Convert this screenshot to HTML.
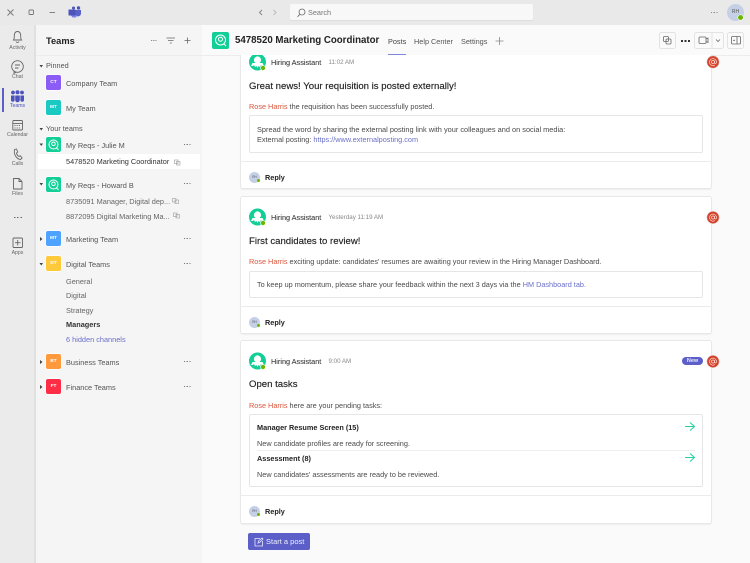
<!DOCTYPE html>
<html><head><meta charset="utf-8">
<style>
html,body{margin:0;padding:0;width:750px;height:563px;overflow:hidden;background:#fafafa;font-family:"Liberation Sans",sans-serif;}
#r{position:relative;width:750px;height:563px;overflow:hidden;filter:blur(.3px);background:#fafafa;}
.a{position:absolute;}
.t{position:absolute;white-space:nowrap;line-height:12px;font-size:7.3px;color:#4a4a4a;}
.s{position:absolute;white-space:nowrap;line-height:12px;font-size:7.35px;color:#555;left:66px;}
.rl{position:absolute;width:35px;text-align:center;left:0;font-size:5.2px;line-height:7px;color:#666;white-space:nowrap;}
.card{position:absolute;left:240px;width:472px;background:#fff;border:1px solid #e8e8e8;border-radius:3px;box-sizing:border-box;box-shadow:0 1px 1px #eee;}
.box{position:absolute;left:249px;width:454px;background:#fff;border:1px solid #e6e6e6;border-radius:2px;box-sizing:border-box;}
.hr{position:absolute;left:240px;width:472px;height:1px;background:#ececec;}
.tile{position:absolute;left:46px;width:15px;height:15px;border-radius:2px;color:#fff;font-size:4.8px;font-weight:bold;line-height:15px;text-align:center;box-shadow:0 0 0 .7px #fff;}
.dots{position:absolute;left:184px;width:7px;height:1.2px;background:repeating-linear-gradient(90deg,#777 0 1.2px,transparent 1.2px 2.7px);}
.rn{color:#d8553c;}
.lk{color:#6a70c8;}
.b{color:#222;}
.h{font-size:9.6px;-webkit-text-stroke:.15px #222;}
.n{-webkit-text-stroke:.1px #444;color:#3c3c3c;}
.rh{position:absolute;left:249px;width:11px;height:11px;border-radius:50%;background:#c5d0e6;color:#556;font-size:3.2px;line-height:11px;text-align:center;}
.st{position:absolute;left:256.500px;width:3.500px;height:3.500px;border-radius:50%;background:#6bb700;}
svg{position:absolute;overflow:visible;}
</style></head><body><div id="r">
<div class="a" style="left:0;top:0;width:750px;height:25px;background:#e9e9e9"></div>
<div class="a" style="left:0;top:25px;width:36px;height:538px;background:#ebebeb"></div>
<div class="a" style="left:34px;top:25px;width:2px;height:538px;background:#e0e0e0"></div>
<div class="a" style="left:36px;top:25px;width:166px;height:538px;background:#f5f5f5"></div>
<div class="a" style="left:36px;top:55px;width:166px;height:1px;background:#ececec"></div>
<div class="a" style="left:202px;top:25px;width:548px;height:31px;background:#fafafa;border-bottom:1px solid #ececec;box-sizing:border-box"></div>

<!-- window controls -->
<svg style="left:0;top:0" width="90" height="25" fill="none" stroke="#777" stroke-width=".9">
<path d="M7.500 9.500l6 6M13.500 9.500l-6 6"/><rect x="29" y="10" width="4.500" height="4.500" rx="1"/><path d="M49.500 12.500h5.500"/>
<circle cx="78.500" cy="8" r="1.700" fill="#4b53bc" stroke="none"/><circle cx="73.500" cy="8" r="1.500" fill="#4b53bc" stroke="none"/>
<path d="M68.500 9.500h7v6h-7z" fill="#4b53bc" stroke="none"/><path d="M75.500 10h5.500v3.500a3 3 0 0 1-5.500 1.500z" fill="#5a62c8" stroke="none"/><path d="M71 15.500h6l-1 2h-3.500z" fill="#7b83eb" stroke="none"/>
</svg>
<svg style="left:255px;top:0" width="30" height="25" fill="none" stroke-width="1"><path d="M7 10l-2.500 2.500L7 15" stroke="#888"/><path d="M18.500 10l2.500 2.500-2.500 2.500" stroke="#bbb"/></svg>
<div class="a" style="left:290px;top:4px;width:243px;height:16px;background:#f8f8f8;border-radius:2px;box-shadow:0 1px 1px #ddd"></div>
<svg style="left:297px;top:8px" width="10" height="10" fill="none" stroke="#666" stroke-width=".8"><circle cx="5" cy="4" r="3"/><path d="M3 6.200L.5 8.800"/></svg>
<div class="t" style="left:308px;top:7px;color:#777">Search</div>
<div class="dots" style="left:711px;top:12px;background:repeating-linear-gradient(90deg,#888 0 1.200px,transparent 1.200px 2.700px)"></div>
<div class="a" style="left:727px;top:4px;width:17px;height:17px;border-radius:50%;background:#c5d0e6;color:#555;font-size:5px;line-height:17px;text-align:center">RH</div>
<div class="a" style="left:738px;top:15px;width:5px;height:5px;border-radius:50%;background:#6bb700;box-shadow:0 0 0 .5px #fff"></div>

<!-- rail -->
<svg style="left:0;top:0" width="36" height="260" fill="none" stroke="#666" stroke-width=".9">
<path d="M13.500 40c.8-1 .8-2 .8-4 0-3 1-4.500 3.200-4.500s3.200 1.500 3.200 4.500c0 2 0 3 .8 4zM16 41.500a1.600 1.600 0 0 0 3 0"/>
<circle cx="17.500" cy="66.500" r="5.800"/><path d="M14 71v2.500l2.500-1.500M15 65h5M15 68h3.500"/>
<rect x="12.800" y="120.500" width="9.700" height="9.500" rx="1"/><path d="M12.800 123.500h9.700"/><path d="M14.500 125.500h6M14.500 128h6" stroke-dasharray="1 1.200"/>
<path d="M14.500 149.500l2-.5 1.200 3-1.200 1c.3 1.500 1.200 2.800 2.500 3.500l1.300-.8 1.800 2.300-1.500 1.500c-4.500-.5-7-5.500-6.100-10z"/>
<path d="M13.500 178.500h5.500l3 3v7.500h-8.500zM19 178.500v3h3"/>
<rect x="13" y="238" width="9.500" height="9.500" rx="1"/><path d="M17.700 240v5.500M15 242.700h5.500"/>
</svg>
<div class="rl" style="top:45px">Activity</div>
<div class="rl" style="top:74px">Chat</div>
<div class="a" style="left:2px;top:88px;width:1.500px;height:24px;background:#5b5fc7"></div>
<svg style="left:10px;top:90px" width="16" height="13" fill="#4b53bc"><circle cx="3" cy="2.500" r="1.900"/><circle cx="7.500" cy="2.200" r="2"/><circle cx="12" cy="2.500" r="1.900"/><path d="M1 5.500h3.600v4.500a1.800 1.800 0 0 1-3.600 0zM10.400 5.500H14v4.500a1.800 1.800 0 0 1-3.600 0zM5.200 5.500h4.600v4.500a2.300 2.300 0 0 1-4.600 0z"/></svg>
<div class="rl" style="top:103px;color:#4b53bc">Teams</div>
<div class="rl" style="top:132px">Calendar</div>
<div class="rl" style="top:161px">Calls</div>
<div class="rl" style="top:191px">Files</div>
<div class="dots" style="left:13.500px;top:216.500px;width:8px;height:1.500px;background:repeating-linear-gradient(90deg,#666 0 1.500px,transparent 1.500px 3.200px)"></div>
<div class="rl" style="top:250px">Apps</div>

<!-- sidebar -->
<div class="t" style="left:46px;top:35px;font-size:9.300px;font-weight:bold;color:#222">Teams</div>
<svg style="left:150px;top:36px" width="44" height="10" fill="none" stroke="#666" stroke-width=".8"><path d="M1 4.500h5.500" stroke-dasharray="1.200 1"/><path d="M16.500 2h8.500M18 4.500h5.500M19.800 7h2"/><path d="M34.500 4.500h6M37.500 1.500v6"/></svg>
<div class="t" style="left:46px;top:60px;color:#555">Pinned</div>
<div class="t" style="left:46px;top:123px;color:#555">Your teams</div>
<svg style="left:38px;top:60px" width="8" height="340" fill="#444">
<path d="M1.500 5h3.500L3.250 7.500zM1.500 68h3.500L3.250 70.500zM1.500 83.500h3.500L3.250 86zM1.500 123h3.500L3.250 125.500zM1.500 203h3.500L3.250 205.500z"/>
<path d="M2 177l2.500 2-2.500 2zM2 300l2.500 2-2.500 2zM2 325l2.500 2-2.500 2z"/></svg>
<div class="tile" style="top:75px;background:#8b5cf6">CT</div><div class="s" style="top:77.500px">Company Team</div>
<div class="tile" style="top:100px;background:#1bc9c3">MT</div><div class="s" style="top:102.500px">My Team</div>
<div class="tile" style="top:137px;background:#12cf97"></div><div class="s" style="top:139.500px">My Reqs - Julie M</div>
<div class="a" style="left:38px;top:154px;width:162px;height:15px;background:#fff"></div>
<div class="s" style="top:156px;color:#333">5478520 Marketing Coordinator</div>
<div class="tile" style="top:177px;background:#12cf97"></div><div class="s" style="top:179.500px">My Reqs - Howard B</div>
<div class="s" style="top:196px;color:#666">8735091 Manager, Digital dep...</div>
<div class="s" style="top:210.500px;color:#666">8872095 Digital Marketing Ma...</div>
<div class="tile" style="top:231px;background:#4da3ff">MT</div><div class="s" style="top:233.500px">Marketing Team</div>
<div class="tile" style="top:256px;background:#ffc93c">DT</div><div class="s" style="top:258.500px">Digital Teams</div>
<div class="s" style="top:275.500px;color:#666">General</div>
<div class="s" style="top:290px;color:#666">Digital</div>
<div class="s" style="top:304.500px;color:#666">Strategy</div>
<div class="s" style="top:319px;color:#333;font-weight:bold">Managers</div>
<div class="s lk" style="top:334px">6 hidden channels</div>
<div class="tile" style="top:354px;background:#ff9a3c">BT</div><div class="s" style="top:356.500px">Business Teams</div>
<div class="tile" style="top:379px;background:#ff2d46">FT</div><div class="s" style="top:381.500px">Finance Teams</div>
<div class="dots" style="top:143.500px"></div>
<div class="dots" style="top:183px"></div>
<div class="dots" style="top:237.500px"></div>
<div class="dots" style="top:262.500px"></div>
<div class="dots" style="top:360.500px"></div>
<div class="dots" style="top:385.500px"></div>
<svg style="left:46px;top:137px" width="16" height="56" fill="none" stroke="#fff" stroke-width="1"><circle cx="7.500" cy="7.500" r="4.500"/><circle cx="7.500" cy="6.800" r="1.800"/><path d="M10.500 11l2 2"/><circle cx="7.500" cy="47.500" r="4.500"/><circle cx="7.500" cy="46.800" r="1.800"/><path d="M10.500 51l2 2"/></svg>
<svg style="left:173px;top:159px" width="10" height="62" fill="none" stroke="#999" stroke-width=".6"><rect x="1.500" y="1" width="3.500" height="3.500"/><rect x="3.500" y="2.500" width="3.500" height="3.500"/><rect x="-.5" y="39.500" width="3.500" height="3.500"/><rect x="2" y="41" width="3.500" height="3.500"/><rect x=".5" y="54" width="3.500" height="3.500"/><rect x="3" y="55.500" width="3.500" height="3.500"/></svg>

<!-- header -->
<div class="a" style="left:212px;top:32px;width:17px;height:17px;background:#12cf97;border-radius:2px"></div>
<svg style="left:212px;top:32px" width="17" height="17" fill="none" stroke="#fff" stroke-width="1"><circle cx="8.500" cy="8" r="5"/><circle cx="8.500" cy="7.200" r="2"/><path d="M12 12l2 2"/></svg>
<div class="t" style="left:235px;top:35px;font-size:9.700px;font-weight:bold;color:#222">5478520 Marketing Coordinator</div>
<div class="t" style="left:388px;top:35.500px;color:#444">Posts</div>
<div class="a" style="left:388px;top:54px;width:18px;height:1.500px;background:#7f85d8"></div>
<div class="t" style="left:414px;top:35.500px;color:#555">Help Center</div>
<div class="t" style="left:461px;top:35.500px;color:#555">Settings</div>
<svg style="left:495px;top:36px" width="10" height="10" fill="none" stroke="#888" stroke-width=".8"><path d="M.5 5h8M4.500 1v8"/></svg>
<svg style="left:659px;top:32px" width="91" height="18" fill="none" stroke="#e3e3e3" stroke-width="1">
<rect x=".5" y=".5" width="16" height="16" rx="2"/><rect x="35.500" y=".5" width="29" height="16" rx="2"/><path d="M53 .5v16"/><rect x="68.500" y=".5" width="16" height="16" rx="2"/>
<g stroke="#666" stroke-width=".8"><rect x="4.500" y="4.500" width="5" height="5" rx="1"/><rect x="7" y="7" width="5" height="5" rx="1"/>
<rect x="40" y="5" width="7" height="6.500" rx="1"/><path d="M47 7l2-1v4.500l-2-1M57 7.500l2 2 2-2"/>
<rect x="72.500" y="4.500" width="9" height="7.500" rx="1"/><path d="M78 4.500v7.500M74 8.300h2"/></g></svg>
<div class="dots" style="left:681px;top:39.500px;width:9px;height:2px;background:repeating-linear-gradient(90deg,#333 0 2px,transparent 2px 3.400px)"></div>

<!-- Card 1 -->
<div class="card" style="top:55px;height:134px;border-top:none;border-radius:0 0 3px 3px"></div>
<div class="hr" style="top:161px"></div>
<div class="box" style="top:115px;height:38px"></div>
<div class="t n" style="left:271px;top:56.500px">Hiring Assistant</div>
<div class="t" style="left:328.500px;top:57px;font-size:6.200px;color:#888">11:02 AM</div>
<div class="t b h" style="left:249px;top:80.500px">Great news! Your requisition is posted externally!</div>
<div class="t" style="left:249px;top:100.500px"><span class="rn">Rose Harris</span> the requisition has been successfully posted.</div>
<div class="t" style="left:257px;top:123.500px;font-size:7.380px">Spread the word by sharing the external posting link with your colleagues and on social media:</div>
<div class="t" style="left:257px;top:134px">External posting: <span class="lk">https://www.externalposting.com</span></div>
<div class="rh" style="top:171.500px">RH</div><div class="st" style="top:178.500px"></div>
<div class="t b" style="left:265px;top:171.500px;font-weight:bold">Reply</div>

<!-- Card 2 -->
<div class="card" style="top:196px;height:138px"></div>
<div class="hr" style="top:306px"></div>
<div class="box" style="top:271px;height:27px"></div>
<div class="t n" style="left:271px;top:212px">Hiring Assistant</div>
<div class="t" style="left:328.500px;top:212px;font-size:6.200px;color:#888">Yesterday 11:19 AM</div>
<div class="t b h" style="left:249px;top:235.500px">First candidates to review!</div>
<div class="t" style="left:249px;top:255.500px"><span class="rn">Rose Harris</span> exciting update: candidates' resumes are awaiting your review in the Hiring Manager Dashboard.</div>
<div class="t" style="left:257px;top:279px">To keep up momentum, please share your feedback within the next 3 days via the <span class="lk">HM Dashboard tab.</span></div>
<div class="rh" style="top:316.500px">RH</div><div class="st" style="top:323.500px"></div>
<div class="t b" style="left:265px;top:316.500px;font-weight:bold">Reply</div>

<!-- Card 3 -->
<div class="card" style="top:340px;height:184px"></div>
<div class="hr" style="top:495px"></div>
<div class="box" style="top:414px;height:73px"></div>
<div class="a" style="left:257px;top:450px;width:438px;height:1px;background:#eee"></div>
<div class="t n" style="left:271px;top:356px">Hiring Assistant</div>
<div class="t" style="left:328.500px;top:356px;font-size:6.200px;color:#888">9:00 AM</div>
<div class="t b h" style="left:249px;top:379px">Open tasks</div>
<div class="t" style="left:249px;top:400px"><span class="rn">Rose Harris</span> here are your pending tasks:</div>
<div class="t b" style="left:257px;top:422px;font-weight:bold">Manager Resume Screen (15)</div>
<div class="t" style="left:257px;top:437.500px">New candidate profiles are ready for screening.</div>
<div class="t b" style="left:257px;top:453px;font-weight:bold">Assessment (8)</div>
<div class="t" style="left:257px;top:469px">New candidates' assessments are ready to be reviewed.</div>
<div class="rh" style="top:505.500px">RH</div><div class="st" style="top:512.500px"></div>
<div class="t b" style="left:265px;top:505.500px;font-weight:bold">Reply</div>
<div class="a" style="left:682px;top:357px;width:21px;height:8px;border-radius:4px;background:#5b5fc7;color:#e8e8ff;font-size:5.500px;font-weight:bold;line-height:8px;text-align:center">New</div>
<svg style="left:684px;top:420px" width="12" height="44" fill="none" stroke="#22d3a0" stroke-width="1"><path d="M1 6.500h9.500M6 2.500l4.500 4-4.500 4M1 37.500h9.500M6 33.500l4.500 4-4.500 4"/></svg>

<!-- Start a post -->
<div class="a" style="left:248px;top:533px;width:62px;height:17px;background:#5b5fc7;border-radius:2px"></div>
<svg style="left:254px;top:537px" width="10" height="10" fill="none" stroke="#e8e8ff" stroke-width=".8"><path d="M6 1.500H1v7.500h7.500V4M4 6l.5-2 3.500-3 1 1-3.500 3.500z"/></svg>
<div class="t" style="left:266px;top:536px;color:#f0f0ff;font-size:7.500px">Start a post</div>

<!-- bot avatars -->
<div class="a" style="left:240px;top:55px;width:40px;height:330px;overflow:hidden">
<svg style="left:0;top:-5px" width="40" height="340">
<defs><g id="bot"><circle cx="17.500" cy="12" r="8.500" fill="#12cf97"/><circle cx="17.500" cy="10" r="3.600" fill="#fff"/><path d="M12.500 13h10l1.500 3h-2l-1-1-1 2-1.500-1-1 2-1-2-1.500 1-1-2-1 1h-2z" fill="#fff"/><circle cx="23" cy="18" r="2.500" fill="#6bb700" stroke="#fff" stroke-width=".6"/></g></defs>
<use href="#bot" y="0"/><use href="#bot" y="155"/><use href="#bot" y="299"/>
</svg></div>
<!-- mention -->
<svg style="left:705.500px;top:55.500px" width="16" height="320"><defs><g id="at"><circle cx="7" cy="6" r="6.200" fill="#d5452e" stroke="#ddd" stroke-width=".5"/><circle cx="7" cy="6" r="1.500" fill="none" stroke="#ffd8cf" stroke-width=".7"/><path d="M8.500 4.500v2.200c0 1.200 2 1 2-.7A3.500 3.500 0 1 0 9 9" fill="none" stroke="#ffd8cf" stroke-width=".7"/></g></defs>
<use href="#at" y="0"/><use href="#at" y="155.500"/><use href="#at" y="299.500"/></svg>
</div></body></html>
